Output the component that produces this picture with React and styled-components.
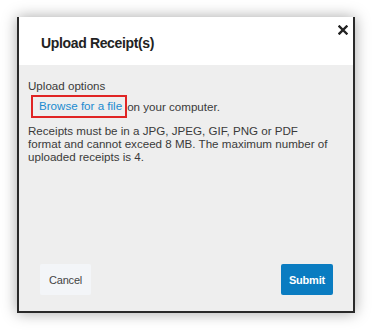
import React from "react";
import styled, { createGlobalStyle } from "styled-components";

const Global = createGlobalStyle`
  html, body {
    margin: 0;
    padding: 0;
    background: #ffffff;
  }
  body {
    font-family: "Liberation Sans", Arial, sans-serif;
  }
`;

const Page = styled.div`
  width: 373px;
  height: 331px;
  padding: 17px 0 0 17px;
  box-sizing: border-box;
`;

const Dialog = styled.div`
  width: 338px;
  height: 296px;
  box-sizing: border-box;
  display: flex;
  flex-direction: column;
  border: 2px solid #2a2a2a;
  border-top: none;
  background: #eeeeee;
  box-shadow: 0 0 14px rgba(0, 0, 0, 0.35);
`;

const Header = styled.div`
  position: relative;
  height: 48px;
  background: #ffffff;
  display: flex;
  align-items: center;
  padding: 4px 0 0 22px;
  box-sizing: border-box;
`;

const Title = styled.h2`
  margin: 0;
  font-size: 14px;
  letter-spacing: -0.35px;
  font-weight: bold;
  color: #222222;
`;

const Close = styled.button`
  position: absolute;
  top: 6px;
  right: 3px;
  border: none;
  background: none;
  padding: 0;
  width: 14px;
  height: 14px;
  cursor: pointer;
  display: flex;
  align-items: center;
  justify-content: center;
`;

const Body = styled.div`
  flex: 1;
  padding: 14px 8px 0 9px;
  font-size: 11.6px;
  color: #3a3a3a;
`;

const Label = styled.div`
  line-height: 14px;
`;

const BrowseRow = styled.div`
  display: flex;
  align-items: center;
  margin: 2px 0 6px 3px;
  line-height: 14px;
`;

const Browse = styled.a`
  color: #1a8bd0;
  text-decoration: none;
  border: 2px solid #e02424;
  padding: 2px 3px 3px 6px;
`;

const Note = styled.p`
  margin: 0;
  width: 300px;
  line-height: 13px;
`;

const Footer = styled.div`
  display: flex;
  justify-content: space-between;
  align-items: center;
  padding: 0 20px 16px 21px;
`;

const Button = styled.button`
  height: 31px;
  border: none;
  border-radius: 2px;
  font-family: "Liberation Sans", Arial, sans-serif;
  font-size: 11px;
  letter-spacing: -0.2px;
  padding: 0 ${(p) => (p.$primary ? "8px" : "9px")};
  min-width: ${(p) => (p.$primary ? "52px" : "49px")};
  background: ${(p) => (p.$primary ? "#0a7cc1" : "#f3f5f8")};
  color: ${(p) => (p.$primary ? "#ffffff" : "#444444")};
  font-weight: ${(p) => (p.$primary ? "bold" : "normal")};
  cursor: pointer;
`;

export default function App() {
  return (
    <Page>
      <Global />
      <Dialog>
        <Header>
          <Title>Upload Receipt(s)</Title>
          <Close aria-label="Close">
            <svg width="10" height="10" viewBox="0 0 10 10">
              <path d="M1.5 1.5 L8.5 8.5 M8.5 1.5 L1.5 8.5" stroke="#222" strokeWidth="2.4" strokeLinecap="square" />
            </svg>
          </Close>
        </Header>
        <Body>
          <Label>Upload options</Label>
          <BrowseRow>
            <Browse href="#">Browse for a file</Browse>
            <span>on your computer.</span>
          </BrowseRow>
          <Note>
            Receipts must be in a JPG, JPEG, GIF, PNG or PDF format and cannot exceed 8 MB. The maximum number of
            uploaded receipts is 4.
          </Note>
        </Body>
        <Footer>
          <Button>Cancel</Button>
          <Button $primary>Submit</Button>
        </Footer>
      </Dialog>
    </Page>
  );
}
